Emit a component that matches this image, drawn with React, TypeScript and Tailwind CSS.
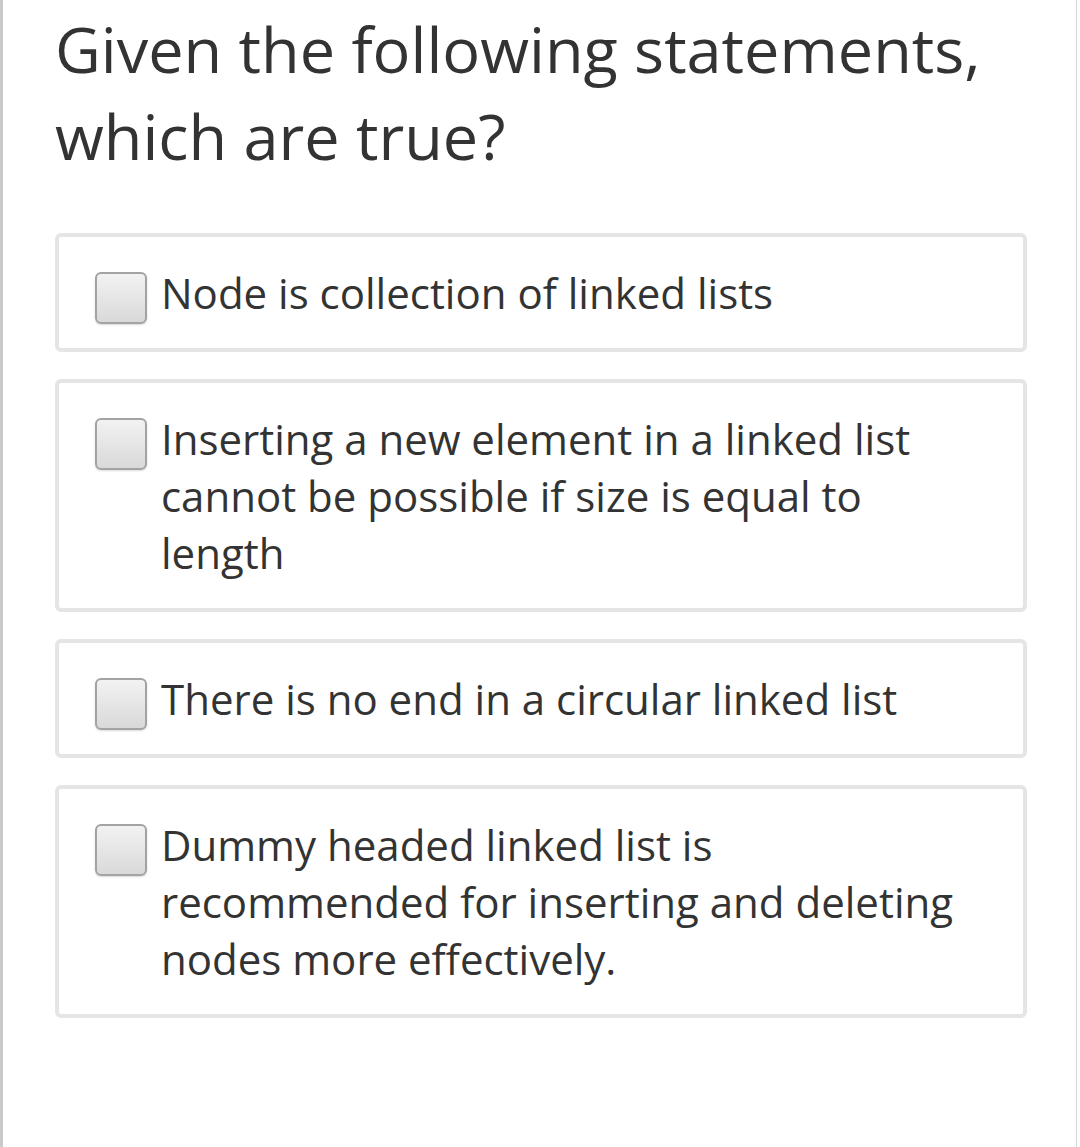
const options = [
  'Node is collection of linked lists',
  'Inserting a new element in a linked list cannot be possible if size is equal to length',
  'There is no end in a circular linked list',
  'Dummy headed linked list is recommended for inserting and deleting nodes more effectively.',
];

function Checkbox() {
  return (
    <span className="mt-2 -mb-[3px] h-[52px] w-[52px] shrink-0 rounded-[6px] border-2 border-[#a3a3a3] bg-gradient-to-b from-[#f2f2f2] to-[#d9d9d9] shadow-[0_1px_2px_rgba(0,0,0,0.15)]" />
  );
}

export default function App() {
  return (
    <div
      className="min-h-[1147px] w-[1077px] border-l-[3px] border-r border-l-[#c9c9c9] border-r-[#d9d9d9] bg-white text-[#333333]"
      style={{ fontFamily: '"Open Sans", "Noto Sans", sans-serif' }}
    >
      <div className="pl-[52px] pr-[49px] pt-[5px]">
        <h1 className="text-[63px] font-normal leading-[87px]">
          Given the following statements,
          <br />
          which are true?
        </h1>
        <div className="mt-[54px] flex flex-col gap-[27px]">
          {options.map((o) => (
            <label
              key={o}
              className="flex items-start gap-[14px] rounded-[6px] border-4 border-[#e5e5e5] px-9 py-[27px]"
            >
              <Checkbox />
              <span className="text-[42px] leading-[57px]">{o}</span>
            </label>
          ))}
        </div>
      </div>
    </div>
  );
}
